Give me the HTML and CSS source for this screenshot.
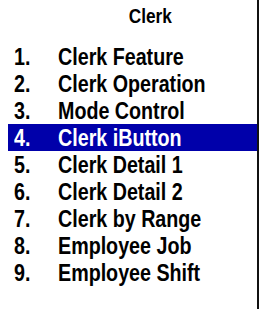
FILE: index.html
```html
<!DOCTYPE html>
<html lang="en">
<head>
    <meta charset="UTF-8">
    <meta name="viewport" content="width=device-width, initial-scale=1.0">
    <title>Clerk</title>
    <link rel="stylesheet" href="styles.css">
</head>
<body>

    <div class="painel">
        <!-- Titulo -->
        <div class="titulo"><span class="estreito centro">Clerk</span></div>

        <!-- Menu -->
        <ul class="menu">
            <li class="item"><span class="num estreito">1.</span><span class="estreito">Clerk Feature</span></li>
            <li class="item"><span class="num estreito">2.</span><span class="estreito">Clerk Operation</span></li>
            <li class="item"><span class="num estreito">3.</span><span class="estreito">Mode Control</span></li>
            <li class="item ativo"><span class="num estreito">4.</span><span class="estreito">Clerk iButton</span></li>
            <li class="item"><span class="num estreito">5.</span><span class="estreito">Clerk Detail 1</span></li>
            <li class="item"><span class="num estreito">6.</span><span class="estreito">Clerk Detail 2</span></li>
            <li class="item"><span class="num estreito">7.</span><span class="estreito">Clerk by Range</span></li>
            <li class="item"><span class="num estreito">8.</span><span class="estreito">Employee Job</span></li>
            <li class="item"><span class="num estreito">9.</span><span class="estreito">Employee Shift</span></li>
        </ul>
    </div>

</body>
</html>
```

FILE: styles.css
```css
body {
    margin: 0;
    background-color: #fff;
    color: #000;
    font-family: "Liberation Sans", Arial, sans-serif;
    font-weight: bold;
}
.painel {
    width: 257px;
    height: 309px;
    border-right: 2px solid #111;
}
.titulo {
    padding-top: 4px;
    padding-left: 44px;
    font-size: 21px;
    line-height: 24px;
    text-align: center;
}
/* fonte condensada: sem Arial Narrow, comprime a Liberation Sans */
.estreito {
    display: inline-block;
    transform: scaleX(0.82);
    transform-origin: left center;
    white-space: nowrap;
}
.centro {
    transform-origin: center;
}
.menu {
    list-style: none;
    margin: 15px 0 0 8px;
    padding: 0;
}
.item {
    display: flex;
    padding-left: 6px;
    font-size: 24px;
    line-height: 27px;
}
.num {
    width: 44px;
    flex-shrink: 0;
}
.ativo {
    background-color: #0000aa;
    color: #fff;
}
```
